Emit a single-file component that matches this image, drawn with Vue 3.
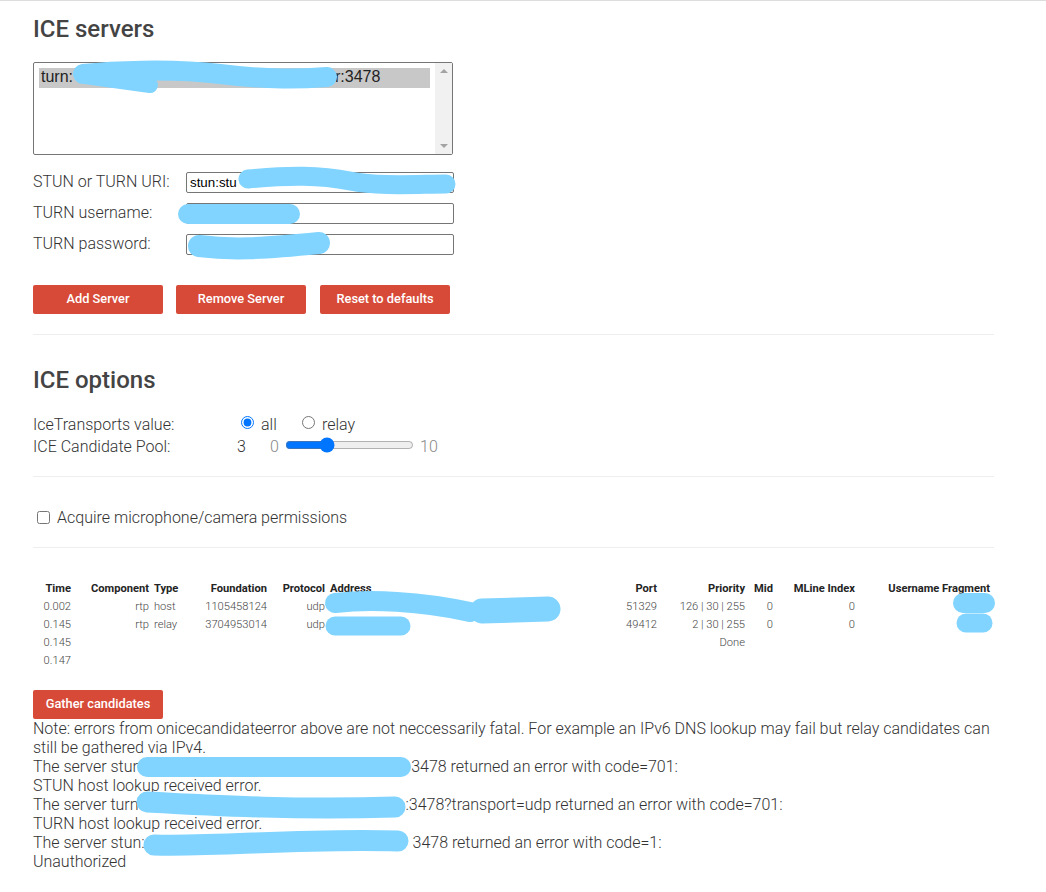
<script setup>
import { ref } from 'vue'

const columns = [
  { key: 'time', name: 'Time', width: 32 },
  { key: 'component', name: 'Component', width: 78 },
  { key: 'type', name: 'Type', width: 39, left: true },
  { key: 'foundation', name: 'Foundation', width: 79 },
  { key: 'protocol', name: 'Protocol', width: 58 },
  { key: 'address', name: 'Address', width: 273, left: true },
  { key: 'port', name: 'Port', width: 59 },
  { key: 'priority', name: 'Priority', width: 88 },
  { key: 'mid', name: 'Mid', width: 28 },
  { key: 'mline', name: 'MLine Index', width: 82 },
  { key: 'ufrag', name: 'Username Fragment', width: 135 }
]

const candidates = [
  { time: '0.002', component: 'rtp', type: 'host', foundation: '1105458124', protocol: 'udp', port: '51329', priority: '126 | 30 | 255', mid: '0', mline: '0' },
  { time: '0.145', component: 'rtp', type: 'relay', foundation: '3704953014', protocol: 'udp', port: '49412', priority: '2 | 30 | 255', mid: '0', mline: '0' },
  { time: '0.145', priority: 'Done' },
  { time: '0.147' }
]

const transport = ref('all')
const poolSize = ref(3)
const acquire = ref(false)
</script>

<template>
  <div class="page">
    <section class="servers">
      <h2>ICE servers</h2>
      <div class="listbox">
        <div class="options">
          <div class="option selected">turn:<span class="gap-option"></span>r:3478</div>
        </div>
        <div class="scrollbar">
          <span class="arrow up"></span>
          <span class="arrow down"></span>
        </div>
      </div>
      <div class="field">
        <label>STUN or TURN URI:</label>
        <input type="text" value="stun:stu" />
      </div>
      <div class="field">
        <label>TURN username:</label>
        <input type="text" />
      </div>
      <div class="field">
        <label>TURN password:</label>
        <input type="text" />
      </div>
      <div class="buttons">
        <button>Add Server</button>
        <button>Remove Server</button>
        <button>Reset to defaults</button>
      </div>
    </section>

    <section class="options-section">
      <h2>ICE options</h2>
      <div class="opt-row">
        <span class="opt-label">IceTransports value:</span>
        <label class="radio first"><input type="radio" value="all" v-model="transport" />all</label>
        <label class="radio"><input type="radio" value="relay" v-model="transport" />relay</label>
      </div>
      <div class="opt-row">
        <span class="opt-label">ICE Candidate Pool:</span>
        <span class="pool-value">3</span>
        <span class="bound low">0</span>
        <input class="slider" type="range" min="0" max="10" v-model="poolSize" />
        <span class="bound">10</span>
      </div>
    </section>

    <section class="acquire">
      <label><input type="checkbox" v-model="acquire" />Acquire microphone/camera permissions</label>
    </section>

    <section class="results">
      <table>
        <colgroup>
          <col v-for="col in columns" :key="col.key" :style="{ width: col.width + 'px' }" />
        </colgroup>
        <thead>
          <tr>
            <th v-for="col in columns" :key="col.key" :class="{ left: col.left }">{{ col.name }}</th>
          </tr>
        </thead>
        <tbody>
          <tr v-for="(row, i) in candidates" :key="i">
            <td v-for="col in columns" :key="col.key" :class="{ left: col.left }">{{ row[col.key] }}</td>
          </tr>
        </tbody>
      </table>
      <button class="gather">Gather candidates</button>
      <div class="log">
        <div>Note: errors from onicecandidateerror above are not neccessarily fatal. For example an IPv6 DNS lookup may fail but relay candidates can still be gathered via IPv4.</div>
        <div>The server stun<span class="gap gap-a"></span>3478 returned an error with code=701:</div>
        <div>STUN host lookup received error.</div>
        <div>The server turn<span class="gap gap-b"></span>:3478?transport=udp returned an error with code=701:</div>
        <div>TURN host lookup received error.</div>
        <div>The server stun:<span class="gap gap-c"></span>3478 returned an error with code=1:</div>
        <div>Unauthorized</div>
      </div>
    </section>

    <!-- blue redaction marks painted over the screenshot -->
    <svg class="marks" viewBox="0 0 1046 892" fill="none" stroke="#80d4ff" stroke-linecap="round" stroke-linejoin="round">
      <path stroke-width="20" d="M83 74C110 71 170 68 220 74S300 79 327 77" />
      <path stroke-width="16" d="M85 76L150 85" />
      <path stroke-width="19" d="M248 179C290 175 320 175 350 181S420 184 446 184" />
      <path stroke-width="20" d="M188 214L290 214" />
      <path stroke-width="22" d="M199 246C230 250 260 249 319 243" />
      <path stroke-width="20" d="M335 603C370 599 420 601 470 612" />
      <path stroke-width="25" d="M482 611L548 609" />
      <path stroke-width="19" d="M335 626L401 626" />
      <path stroke-width="20" d="M963 603L985 603" />
      <path stroke-width="19" d="M966 623L983 623" />
      <path stroke-width="20" d="M147 767L401 767" />
      <path stroke-width="21" d="M147 802C220 806 300 810 395 807" />
      <path stroke-width="21" d="M154 845C220 847 300 838 398 841" />
    </svg>
  </div>
</template>

<style>
html, body {
  background: #fff;
}
</style>

<style scoped>
.page {
  position: relative;
  box-sizing: border-box;
  width: 1046px;
  height: 892px;
  overflow: hidden;
  padding: 0 52px 0 33px;
  border-top: 1px solid #ddd;
  font-family: Roboto, "Liberation Sans", sans-serif;
  font-weight: 300;
  font-size: 16px;
  line-height: 19px;
  color: #333;
}

h2 {
  margin: 0;
  font-size: 24px;
  line-height: 28px;
  font-weight: 500;
  color: #444;
}

button {
  width: 130px;
  height: 29px;
  padding: 0 0 2px;
  border: none;
  border-radius: 2px;
  background: #d84a38;
  color: #fff;
  font-family: Roboto, "Liberation Sans", sans-serif;
  font-size: 12.8px;
  font-weight: 500;
}

/* ICE servers */
.servers {
  padding-top: 14px;
  padding-bottom: 20px;
  border-bottom: 1px solid #eee;
}

.listbox {
  display: flex;
  box-sizing: border-box;
  width: 420px;
  height: 93px;
  margin-top: 19px;
  border: 1px solid #767676;
  border-radius: 2px;
  font-family: "Liberation Sans", Arial, sans-serif;
  font-weight: 400;
}

.options {
  flex: 1;
  padding: 5px 5px 0;
}

.option {
  height: 20px;
  line-height: 18px;
  padding-left: 2px;
  color: #222;
}

.option.selected {
  background: #c8c8c8;
}

.gap-option {
  display: inline-block;
  width: 262px;
}

.scrollbar {
  display: flex;
  flex-direction: column;
  justify-content: space-between;
  align-items: center;
  width: 17px;
  padding: 6px 0;
  box-sizing: border-box;
  background: #f1f1f1;
}

.arrow {
  width: 0;
  height: 0;
  border-left: 4px solid transparent;
  border-right: 4px solid transparent;
}

.arrow.up {
  border-bottom: 4px solid #a3a3a3;
}

.arrow.down {
  border-top: 4px solid #a3a3a3;
}

.field {
  display: flex;
  align-items: center;
  height: 21px;
  margin-top: 10px;
}

.servers .listbox + .field {
  margin-top: 17px;
}

.field label {
  width: 153px;
  margin-top: -2px;
}

.field input {
  box-sizing: border-box;
  width: 268px;
  height: 21px;
  padding: 1px 3px;
  border: 1px solid #767676;
  border-radius: 2px;
  font-family: "Liberation Sans", Arial, sans-serif;
  font-size: 13.33px;
  color: #000;
}

.buttons {
  display: flex;
  gap: 13px;
  margin-top: 30px;
}

.buttons button:last-child {
  margin-left: 1px;
}

/* ICE options */
.options-section {
  padding-top: 31px;
  padding-bottom: 19px;
  border-bottom: 1px solid #eee;
}

.opt-row {
  display: flex;
  align-items: center;
  height: 22px;
}

.options-section h2 + .opt-row {
  margin-top: 19px;
}

.opt-label {
  width: 204px;
}

.radio {
  display: flex;
  align-items: center;
  width: 61px;
}

.radio input {
  width: 13px;
  height: 13px;
  margin: -3px 7px 0 4px;
}

.pool-value {
  width: 33px;
}

.bound {
  color: #888;
}

.bound.low {
  width: 15px;
}

.slider {
  width: 129px;
  margin: 0 6px 2px 0;
}

/* permissions */
.acquire {
  height: 70px;
  border-bottom: 1px solid #eee;
}

.acquire label {
  display: flex;
  align-items: center;
  padding: 31px 0 0 4px;
}

.acquire input {
  width: 13px;
  height: 13px;
  margin: 0 7px 0 0;
}

/* candidates */
.results table {
  table-layout: fixed;
  width: 951px;
  margin: 32px 0 0 8px;
  border-collapse: collapse;
  font-size: 11.15px;
  opacity: 0.99;
}

th, td {
  height: 18px;
  padding: 0 2px 0 3px;
  line-height: 18px;
  text-align: right;
  white-space: nowrap;
}

th {
  font-weight: 700;
  color: #222;
}

td {
  color: #444;
}

th:first-child, td:first-child {
  padding-left: 0;
}

th.left, td.left {
  text-align: left;
}

.gather {
  display: block;
  margin-top: 20px;
}

.log {
  letter-spacing: -0.015px;
}

.gap {
  display: inline-block;
}

.gap-a {
  width: 270px;
}

.gap-b {
  width: 267px;
}

.gap-c {
  width: 268px;
}

.marks {
  position: absolute;
  top: -1px;
  left: 0;
  width: 1046px;
  height: 892px;
  pointer-events: none;
}
</style>
